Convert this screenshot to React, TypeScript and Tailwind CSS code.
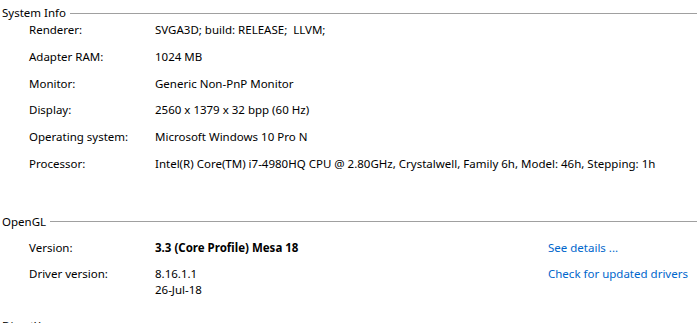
import React from "react";

const font = { fontFamily: '"Segoe UI", "Noto Sans", "Liberation Sans", sans-serif' };

function Heading({ title, className }: { title: string; className?: string }) {
  return (
    <div className={`flex items-center h-[16px] ${className ?? ""}`}>
      <span className="pl-[2px] pr-[4px] text-black whitespace-nowrap">{title}</span>
      <div className="flex-1 h-px bg-[#a0a0a0]" />
    </div>
  );
}

function Row({ label, children, link }: { label: string; children: React.ReactNode; link?: string }) {
  return (
    <div className="flex pl-[29px] leading-[16px]">
      <div className="w-[126px] shrink-0">{label}</div>
      <div className="w-[393px] shrink-0 whitespace-nowrap">{children}</div>
      {link && <div className="text-[#0066cc] whitespace-nowrap cursor-pointer">{link}</div>}
    </div>
  );
}

export default function App() {
  return (
    <div
      className="w-[697px] h-[323px] overflow-hidden bg-white text-black text-[11.5px] leading-[16px]"
      style={font}
    >
      <Heading title="System Info" className="mt-[5px]" />
      <div className="mt-[1px] flex flex-col gap-[10.8px]">
        <Row label="Renderer:">SVGA3D; build: RELEASE;&nbsp; LLVM;</Row>
        <Row label="Adapter RAM:">1024 MB</Row>
        <Row label="Monitor:">Generic Non-PnP Monitor</Row>
        <Row label="Display:">2560 x 1379 x 32 bpp (60 Hz)</Row>
        <Row label="Operating system:">Microsoft Windows 10 Pro N</Row>
        <Row label="Processor:">
          Intel(R) Core(TM) i7-4980HQ CPU @ 2.80GHz, Crystalwell, Family 6h, Model: 46h, Stepping: 1h
        </Row>
      </div>
      <Heading title="OpenGL" className="mt-[42px]" />
      <div className="mt-[10px] flex flex-col gap-[10px]">
        <Row label="Version:" link="See details ...">
          <span className="font-bold">3.3 (Core Profile) Mesa 18</span>
        </Row>
        <Row label="Driver version:" link="Check for updated drivers">
          <div>8.16.1.1</div>
          <div>26-Jul-18</div>
        </Row>
      </div>
      <Heading title="DirectX" className="mt-[20px]" />
    </div>
  );
}
